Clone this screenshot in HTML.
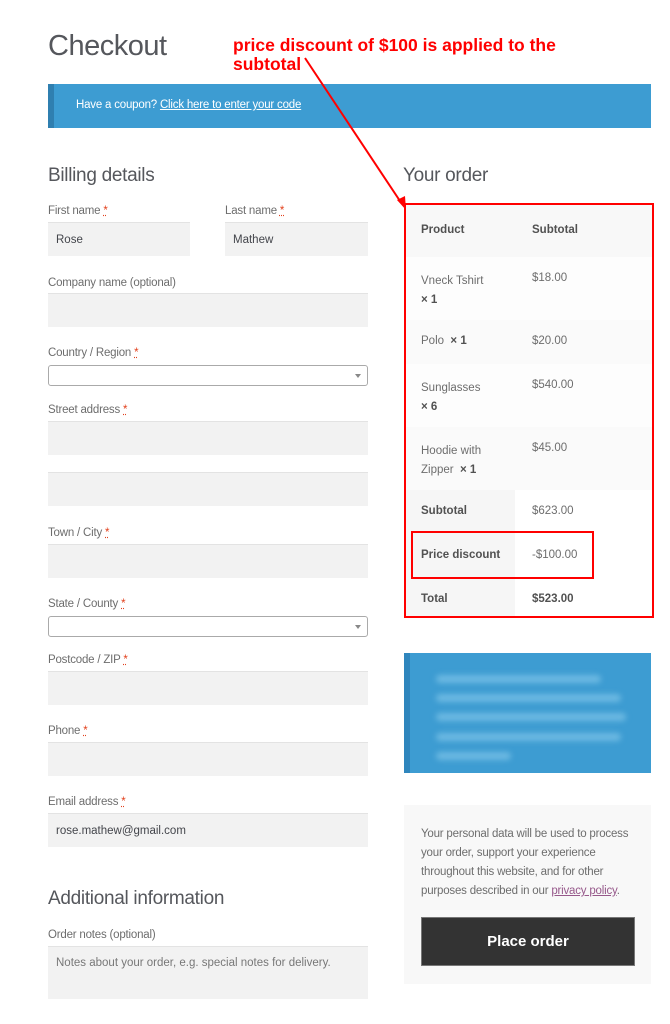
<!DOCTYPE html>
<html><head><meta charset="utf-8"><style>
*{margin:0;padding:0;box-sizing:border-box}
body{width:670px;height:1024px;background:#fff;position:relative;overflow:hidden;font-family:"Liberation Sans",sans-serif;color:#6d6d6d}
.a{position:absolute}
.h1{font-size:29px;font-weight:300;color:#55575c;letter-spacing:-0.5px}
.h2{font-size:19px;font-weight:300;color:#55575c;letter-spacing:-0.3px}
.lbl{font-size:11.5px;color:#6d6d6d;letter-spacing:-0.2px}
.lbl i{color:#e2401c;font-style:normal;text-decoration:underline dotted}
.in{background:#f2f2f2;border-top:1px solid #e3e3e3}
.val{font-size:11.5px;color:#43454b;padding:11px 0 0 8px}
.sel{border:1px solid #aaa;border-radius:3px;background:#fff}
.sel:after{content:"";position:absolute;right:6px;top:8px;border:3.5px solid transparent;border-top:4px solid #888}
.t{font-size:11.5px;color:#6d6d6d}
.b{font-weight:bold;color:#515151}
.bl{position:absolute;height:8px;background:#6cb9e2;filter:blur(3px);border-radius:4px}
</style></head><body>
<div class="a h1" style="left:48px;top:30px">Checkout</div>
<div class="a" style="left:233px;top:36px;color:#f00;font-weight:bold;font-size:17.5px;line-height:19px;width:380px">price discount of $100 is applied to the subtotal</div>
<div class="a" style="left:48px;top:84px;width:603px;height:44px;background:#3d9cd2;border-left:6px solid #2f7fb0"></div>
<div class="a" style="left:76px;top:99px;font-size:11.5px;color:#fff;letter-spacing:-0.2px">Have a coupon? <u>Click here to enter your code</u></div>
<svg class="a" style="left:0;top:0;z-index:5" width="670" height="1024"><line x1="305" y1="58" x2="402" y2="204" stroke="#f00" stroke-width="2"/><polygon points="406,210 397,200 405,196" fill="#f00"/></svg>
<div class="a h2" style="left:48px;top:165px">Billing details</div>
<div class="a h2" style="left:403px;top:165px">Your order</div>

<div class="a lbl" style="left:48px;top:205px">First name <i>*</i></div>
<div class="a in val" style="left:48px;top:222px;width:142px;height:34px">Rose</div>
<div class="a lbl" style="left:225px;top:205px">Last name <i>*</i></div>
<div class="a in val" style="left:225px;top:222px;width:143px;height:34px">Mathew</div>
<div class="a lbl" style="left:48px;top:277px">Company name (optional)</div>
<div class="a in" style="left:48px;top:293px;width:320px;height:34px"></div>
<div class="a lbl" style="left:48px;top:347px">Country / Region <i>*</i></div>
<div class="a sel" style="left:48px;top:365px;width:320px;height:21px"></div>
<div class="a lbl" style="left:48px;top:404px">Street address <i>*</i></div>
<div class="a in" style="left:48px;top:421px;width:320px;height:34px"></div>
<div class="a in" style="left:48px;top:472px;width:320px;height:34px"></div>
<div class="a lbl" style="left:48px;top:527px">Town / City <i>*</i></div>
<div class="a in" style="left:48px;top:544px;width:320px;height:34px"></div>
<div class="a lbl" style="left:48px;top:598px">State / County <i>*</i></div>
<div class="a sel" style="left:48px;top:616px;width:320px;height:21px"></div>
<div class="a lbl" style="left:48px;top:654px">Postcode / ZIP <i>*</i></div>
<div class="a in" style="left:48px;top:671px;width:320px;height:34px"></div>
<div class="a lbl" style="left:48px;top:725px">Phone <i>*</i></div>
<div class="a in" style="left:48px;top:742px;width:320px;height:34px"></div>
<div class="a lbl" style="left:48px;top:796px">Email address <i>*</i></div>
<div class="a in val" style="left:48px;top:813px;width:320px;height:34px">rose.mathew@gmail.com</div>
<div class="a h2" style="left:48px;top:888px">Additional information</div>
<div class="a lbl" style="left:48px;top:929px">Order notes (optional)</div>
<div class="a in val" style="left:48px;top:946px;width:320px;height:53px;color:#777;padding-top:10px">Notes about your order, e.g. special notes for delivery.</div>

<div class="a" style="left:406px;top:205px;width:246px;height:52px;background:#f8f8f8"></div>
<div class="a" style="left:406px;top:257px;width:246px;height:63px;background:#fdfdfd"></div>
<div class="a" style="left:406px;top:320px;width:246px;height:44px;background:#fafafa"></div>
<div class="a" style="left:406px;top:364px;width:246px;height:63px;background:#fdfdfd"></div>
<div class="a" style="left:406px;top:427px;width:246px;height:63px;background:#fafafa"></div>
<div class="a" style="left:406px;top:490px;width:109px;height:126px;background:#f6f6f6"></div>
<div class="a" style="left:404px;top:203px;width:250px;height:415px;border:2px solid #f00"></div>
<div class="a" style="left:411px;top:531px;width:183px;height:48px;border:2px solid #f00"></div>
<div class="a t b" style="left:421px;top:224px">Product</div>
<div class="a t b" style="left:532px;top:224px">Subtotal</div>
<div class="a t" style="left:421px;top:272px;line-height:19px">Vneck Tshirt<br><b class="b">× 1</b></div>
<div class="a t" style="left:532px;top:272px">$18.00</div>
<div class="a t" style="left:421px;top:335px">Polo &nbsp;<b class="b">× 1</b></div>
<div class="a t" style="left:532px;top:335px">$20.00</div>
<div class="a t" style="left:421px;top:379px;line-height:19px">Sunglasses<br><b class="b">× 6</b></div>
<div class="a t" style="left:532px;top:379px">$540.00</div>
<div class="a t" style="left:421px;top:442px;line-height:19px">Hoodie with<br>Zipper &nbsp;<b class="b">× 1</b></div>
<div class="a t" style="left:532px;top:442px">$45.00</div>
<div class="a t b" style="left:421px;top:505px">Subtotal</div>
<div class="a t" style="left:532px;top:505px">$623.00</div>
<div class="a t b" style="left:421px;top:549px">Price discount</div>
<div class="a t" style="left:532px;top:549px">-$100.00</div>
<div class="a t b" style="left:421px;top:593px">Total</div>
<div class="a t b" style="left:532px;top:593px">$523.00</div>

<div class="a" style="left:404px;top:653px;width:247px;height:120px;background:#3d9cd2;border-left:6px solid #2f86bd"></div>
<div class="bl" style="left:436px;top:675px;width:165px"></div>
<div class="bl" style="left:436px;top:694px;width:185px"></div>
<div class="bl" style="left:436px;top:713px;width:190px"></div>
<div class="bl" style="left:436px;top:733px;width:185px"></div>
<div class="bl" style="left:436px;top:752px;width:75px"></div>

<div class="a" style="left:404px;top:805px;width:247px;height:179px;background:#f8f8f8"></div>
<div class="a" style="left:421px;top:825px;width:225px;font-size:11.5px;line-height:19px;color:#6d6d6d;letter-spacing:-0.2px">Your personal data will be used to process your order, support your experience throughout this website, and for other purposes described in our <u style="color:#96588a">privacy policy</u>.</div>
<div class="a" style="left:421px;top:917px;width:214px;height:49px;background:#333;border:1px solid #777;color:#fff;font-weight:bold;font-size:15px;text-align:center;line-height:47px">Place order</div>
</body></html>
